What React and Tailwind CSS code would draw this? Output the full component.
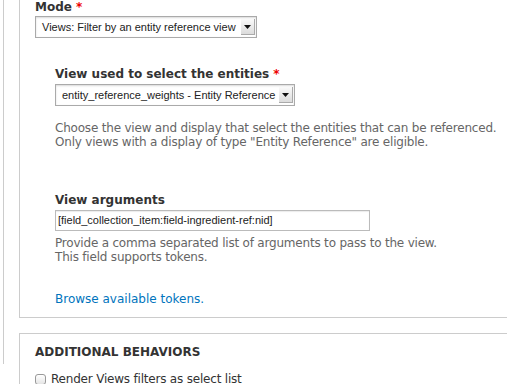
import React from "react";

const F = { fontFamily: '"DejaVu Sans", "Noto Sans", sans-serif' };
const D = { fontFamily: '"DejaVu Sans", "Noto Sans", sans-serif', letterSpacing: "-0.2px" };
const A = { fontFamily: '"Liberation Sans", Arial, sans-serif' };

function Select({ text, w }) {
  return (
    <div
      className="flex h-[22px] items-stretch border border-[#aaa] bg-white shadow-[inset_0_1px_2px_rgba(0,0,0,0.15)]"
      style={{ width: w }}
    >
      <div className="flex flex-1 items-center whitespace-nowrap pl-[6px] text-[11px] text-[#222]" style={A}>
        {text}
      </div>
      <div className="my-[2px] mr-[1px] flex w-[14px] items-center justify-center border-r border-b border-[#aaa] bg-gradient-to-b from-[#fafafa] to-[#dcdcdc]">
        <svg width="7" height="4" viewBox="0 0 7 4">
          <path d="M0 0h7L3.5 4z" fill="#111" />
        </svg>
      </div>
    </div>
  );
}

export default function App() {
  return (
    <div className="h-[384px] w-[507px] overflow-hidden bg-white pl-[3px]">
      <div className="h-full border-l border-[#ccc] pl-[15px]">
        <div className="mt-[-20px] w-[600px] border border-[#ccc] pl-[15px] pt-[18px] pb-[11px]">
          <div className="text-[12px] font-bold leading-[16px] text-[#333]" style={F}>
            Mode <span className="text-[#e00]">*</span>
          </div>
          <div className="mt-[1px]">
            <Select text="Views: Filter by an entity reference view" w="222px" />
          </div>
          <div className="ml-[20px] mt-[28px]">
            <div className="text-[12px] font-bold leading-[16px] text-[#333]" style={F}>
              View used to select the entities <span className="text-[#e00]">*</span>
            </div>
            <div className="mt-[2px]">
              <Select text="entity_reference_weights - Entity Reference" w="240px" />
            </div>
            <div className="mt-[15px] whitespace-nowrap text-[12px] leading-[14px] text-[#666]" style={D}>
              Choose the view and display that select the entities that can be referenced.
              <br />
              Only views with a display of type "Entity Reference" are eligible.
            </div>
            <div className="mt-[43px] text-[12px] font-bold leading-[16px] text-[#333]" style={F}>
              View arguments
            </div>
            <div
              className="mt-[2px] flex h-[21px] w-[315px] items-center border border-[#bbb] bg-white pl-[2px] text-[11px] text-[#222] shadow-[inset_0_1px_1px_rgba(0,0,0,0.08)]"
              style={A}
            >
              [field_collection_item:field-ingredient-ref:nid]
            </div>
            <div className="mt-[5px] whitespace-nowrap text-[12px] leading-[14px] text-[#666]" style={D}>
              Provide a comma separated list of arguments to pass to the view.
              <br />
              This field supports tokens.
            </div>
            <div className="mt-[28px] text-[12px] leading-[14px] text-[#0074bd]" style={F}>
              Browse available tokens.
            </div>
          </div>
        </div>
        <div className="mt-[15px] w-[600px] border border-[#ccc] pl-[15px] pt-[10px]">
          <div className="text-[12px] font-bold uppercase leading-[16px] text-[#333]" style={F}>
            Additional Behaviors
          </div>
          <div className="mt-[11px] flex items-center gap-[5px]">
            <div className="h-[11px] w-[11px] rounded-[3px] border border-[#999] bg-gradient-to-b from-white to-[#e5e5e5]" />
            <span className="text-[12px] leading-[16px] text-[#333]" style={D}>
              Render Views filters as select list
            </span>
          </div>
        </div>
      </div>
    </div>
  );
}
